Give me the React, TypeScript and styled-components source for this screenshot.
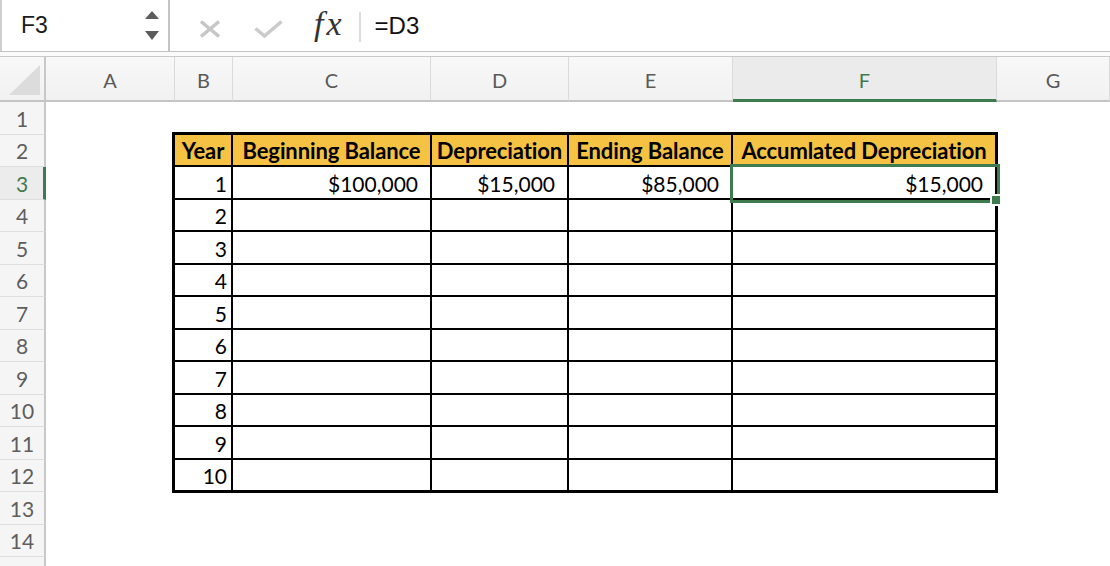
import React from "react";
import styled, { createGlobalStyle } from "styled-components";

const GREEN = "#3e7b4f";
const YELLOW = "#f5c243";

const GlobalStyle = createGlobalStyle`
  * { box-sizing: border-box; }
  html, body { margin: 0; padding: 0; background: #ffffff; }
  body { overflow: hidden; }
`;

const Window = styled.div`
  width: 1110px;
  height: 566px;
  overflow: hidden;
  display: flex;
  flex-direction: column;
  background: #ffffff;
  font-family: "Lato", "Liberation Sans", sans-serif;
`;

const FormulaBar = styled.div`
  height: 52px;
  flex-shrink: 0;
  display: flex;
  align-items: center;
  border-bottom: 1px solid #c2c2c2;
`;

const NameBox = styled.div`
  width: 170px;
  height: 100%;
  display: flex;
  align-items: center;
  justify-content: space-between;
  border-left: 2px solid #cfcfcf;
  border-right: 2px solid #c4c4c4;
  padding: 0 8px 0 19px;
  font-family: "Liberation Sans", Arial, sans-serif;
  font-size: 23px;
  color: #1c1c1c;
`;

const NameText = styled.span`
  margin-top: 0;
`;

const ToolIcon = styled.span<{ $gap: number }>`
  display: flex;
  align-items: center;
  margin-left: ${(p) => p.$gap}px;
  margin-top: 6px;
`;

const Fx = styled.span`
  margin-left: 31px;
  font-family: "Liberation Serif", "Times New Roman", serif;
  font-style: italic;
  font-size: 34px;
  letter-spacing: 3px;
  color: #333333;
  margin-top: -3px;
`;

const Separator = styled.span`
  width: 2px;
  height: 30px;
  margin-left: 14px;
  margin-top: 2px;
  background: #dddddd;
`;

const FormulaText = styled.span`
  margin-left: 14px;
  font-family: "Liberation Sans", Arial, sans-serif;
  font-size: 24px;
  color: #111111;
  margin-top: 0;
`;

const BarGap = styled.div`
  height: 4px;
  flex-shrink: 0;
  background: #fafafa;
`;

const ColumnHeaderBar = styled.div`
  height: 46px;
  flex-shrink: 0;
  display: flex;
  border-top: 1px solid #c9c9c9;
  background: linear-gradient(#f8f8f8, #f1f1f1);
`;

const CornerCell = styled.div`
  width: 46px;
  height: 100%;
  flex-shrink: 0;
  border-right: 2px solid #c8c8c8;
  border-bottom: 2px solid #c4c4c4;
  display: flex;
  align-items: flex-end;
  justify-content: flex-end;
  padding: 0 4px 5px 0;
`;

const ColHeader = styled.div<{ $w?: number; $active?: boolean }>`
  ${(p) => (p.$w ? `width: ${p.$w}px; flex-shrink: 0;` : "flex: 1;")}
  height: 100%;
  display: flex;
  align-items: center;
  justify-content: center;
  border-right: 1px solid #dadada;
  border-bottom: ${(p) => (p.$active ? `3px solid ${GREEN}` : "2px solid #c4c4c4")};
  background: ${(p) => (p.$active ? "#ebebeb" : "transparent")};
  color: ${(p) => (p.$active ? GREEN : "#5a5a5a")};
  font-size: 20px;
  padding-top: ${(p) => (p.$active ? "3px" : "2px")};
`;

const SheetBody = styled.div`
  flex: 1;
  display: flex;
  min-height: 0;
`;

const RowHeaderColumn = styled.div`
  width: 46px;
  flex-shrink: 0;
  display: flex;
  flex-direction: column;
  background: #f5f5f5;
`;

const RowLabel = styled.div<{ $h: number; $active?: boolean }>`
  height: ${(p) => p.$h}px;
  flex-shrink: 0;
  display: flex;
  align-items: center;
  justify-content: center;
  border-bottom: 1px solid #dedede;
  border-right: ${(p) => (p.$active ? `3px solid ${GREEN}` : "2px solid #c8c8c8")};
  background: ${(p) => (p.$active ? "#ececec" : "#f5f5f5")};
  color: ${(p) => (p.$active ? GREEN : "#5e5e5e")};
  font-size: 21px;
  padding-left: ${(p) => (p.$active ? "1px" : "0")};
`;

const Canvas = styled.div`
  flex: 1;
  padding: 30px 0 0 126px;
  background: #ffffff;
`;

const DataTable = styled.div<{ $rows: string }>`
  display: grid;
  grid-template-columns: 56px 197px 135px 162px 262px;
  grid-template-rows: ${(p) => p.$rows};
  gap: 2px;
  width: max-content;
  background: #000000;
  border: 3px solid #000000;
`;

const HeaderCell = styled.div`
  background: ${YELLOW};
  display: flex;
  align-items: center;
  justify-content: center;
  font-weight: 700;
  font-size: 22px;
  letter-spacing: -0.1px;
  color: #000000;
  white-space: nowrap;
  padding-top: 1px;
  overflow: visible;
`;

const DataCell = styled.div<{ $pad: number }>`
  position: relative;
  background: #ffffff;
  display: flex;
  align-items: center;
  justify-content: flex-end;
  padding-right: ${(p) => p.$pad}px;
  font-size: 21px;
  color: #000000;
  white-space: nowrap;
  padding-top: 1px;
`;

const SelectionFrame = styled.div`
  position: absolute;
  left: -3px;
  top: -3px;
  right: -5px;
  bottom: -5px;
  border: 3px solid ${GREEN};
  z-index: 2;
  pointer-events: none;
`;

const FillHandle = styled.div`
  position: absolute;
  right: -7px;
  bottom: -8px;
  width: 12px;
  height: 12px;
  background: ${GREEN};
  border: 2px solid #ffffff;
  z-index: 3;
`;

const columnHeaders: { label: string; w?: number }[] = [
  { label: "A", w: 129 },
  { label: "B", w: 58 },
  { label: "C", w: 198 },
  { label: "D", w: 138 },
  { label: "E", w: 164 },
  { label: "F", w: 264 },
  { label: "G" },
];

const headers = ["Year", "Beginning Balance", "Depreciation", "Ending Balance", "Accumlated Depreciation"];

type Row = [string, string, string, string, string];
const rows: Row[] = [
  ["1", "$100,000", "$15,000", "$85,000", "$15,000"],
  ...Array.from({ length: 9 }, (_, i) => [String(i + 2), "", "", "", ""] as Row),
];

const rowHeight = (n: number) => (n % 2 === 1 ? 33 : 32);

const StepperIcon = () => (
  <svg width="16" height="32" viewBox="0 0 16 32">
    <polygon points="1,9 15,9 8,1" fill="#5c5c5c" />
    <polygon points="1,21 15,21 8,30" fill="#5c5c5c" />
  </svg>
);

const CancelIcon = () => (
  <svg width="24" height="18" viewBox="0 0 24 18">
    <path d="M3 1.5 L21 16.5 M21 1.5 L3 16.5" stroke="#c6c6c6" strokeWidth="3.5" fill="none" />
  </svg>
);

const EnterIcon = () => (
  <svg width="29" height="18" viewBox="0 0 29 18">
    <polyline points="1.5,8.5 10.5,16 27.5,1.5" stroke="#cbcbcb" strokeWidth="3.5" fill="none" />
  </svg>
);

const CornerTriangle = () => (
  <svg width="31" height="30" viewBox="0 0 31 30">
    <polygon points="0,30 31,30 31,0" fill="#dcdcdc" />
  </svg>
);

export default function App() {
  const tableRows = ["30px", ...rows.map((_, i) => `${rowHeight(i + 3) - 2}px`)];
  tableRows[tableRows.length - 1] = "30px";

  return (
    <>
      <GlobalStyle />
      <Window>
        <FormulaBar>
          <NameBox>
            <NameText>F3</NameText>
            <StepperIcon />
          </NameBox>
          <ToolIcon $gap={28}>
            <CancelIcon />
          </ToolIcon>
          <ToolIcon $gap={32}>
            <EnterIcon />
          </ToolIcon>
          <Fx>fx</Fx>
          <Separator />
          <FormulaText>=D3</FormulaText>
        </FormulaBar>
        <BarGap />
        <ColumnHeaderBar>
          <CornerCell>
            <CornerTriangle />
          </CornerCell>
          {columnHeaders.map((c) => (
            <ColHeader key={c.label} $w={c.w} $active={c.label === "F"}>
              {c.label}
            </ColHeader>
          ))}
        </ColumnHeaderBar>
        <SheetBody>
          <RowHeaderColumn>
            {Array.from({ length: 15 }, (_, i) => (
              <RowLabel key={i} $h={rowHeight(i + 1)} $active={i + 1 === 3}>
                {i < 14 ? i + 1 : ""}
              </RowLabel>
            ))}
          </RowHeaderColumn>
          <Canvas>
            <DataTable $rows={tableRows.join(" ")}>
              {headers.map((h) => (
                <HeaderCell key={h}>{h}</HeaderCell>
              ))}
              {rows.map((r, ri) =>
                r.map((v, ci) => (
                  <DataCell key={`${ri}-${ci}`} $pad={ci === 0 ? 4 : 12}>
                    {v}
                    {ri === 0 && ci === 4 && (
                      <>
                        <SelectionFrame />
                        <FillHandle />
                      </>
                    )}
                  </DataCell>
                ))
              )}
            </DataTable>
          </Canvas>
        </SheetBody>
      </Window>
    </>
  );
}
